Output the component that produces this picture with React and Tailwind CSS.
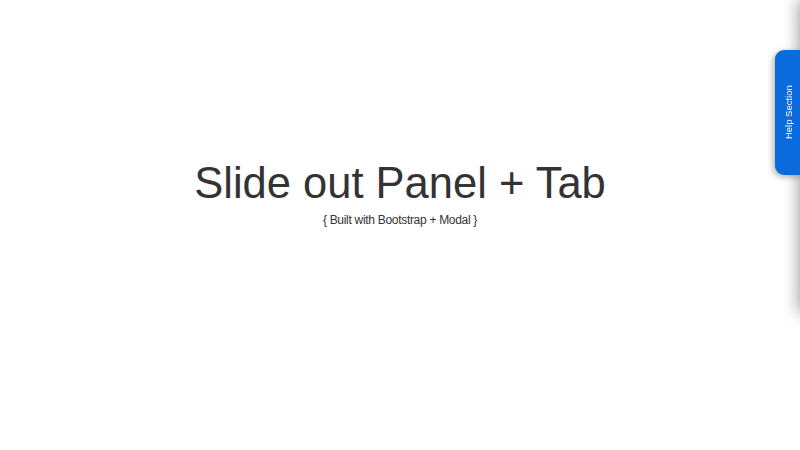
import { useState } from "react";

function SlidePanel() {
  const [open, setOpen] = useState(false);

  return (
    <aside
      className={
        open
          ? "fixed top-0 right-0 h-[312px] w-[300px] bg-white shadow-[0_0_16px_rgba(0,0,0,0.45)]"
          : "fixed top-0 right-[-300px] h-[312px] w-[300px] bg-white shadow-[0_0_16px_rgba(0,0,0,0.45)]"
      }
    >
      <button
        type="button"
        onClick={() => setOpen(!open)}
        className="absolute top-[50px] left-[-25px] flex h-[125px] w-[28px] items-center justify-center rounded-l-[9px] bg-[#0b6bdc] shadow-[-2px_2px_6px_rgba(0,0,0,0.3)]"
      >
        <span className="-rotate-90 whitespace-nowrap text-[9.5px] text-white">
          Help Section
        </span>
      </button>
    </aside>
  );
}

function App() {
  return (
    <main className="relative h-[450px] w-full overflow-hidden bg-white font-['Liberation_Sans',Arial,sans-serif] text-[#333]">
      <div className="flex flex-col items-center pt-[156px]">
        <h1 className="text-[43.5px] leading-[54px]">Slide out Panel + Tab</h1>
        <p className="mt-[2px] text-[12px] leading-4 tracking-[-0.3px]">
          {"{ Built with Bootstrap + Modal }"}
        </p>
      </div>
      <SlidePanel />
    </main>
  );
}

export default App;
